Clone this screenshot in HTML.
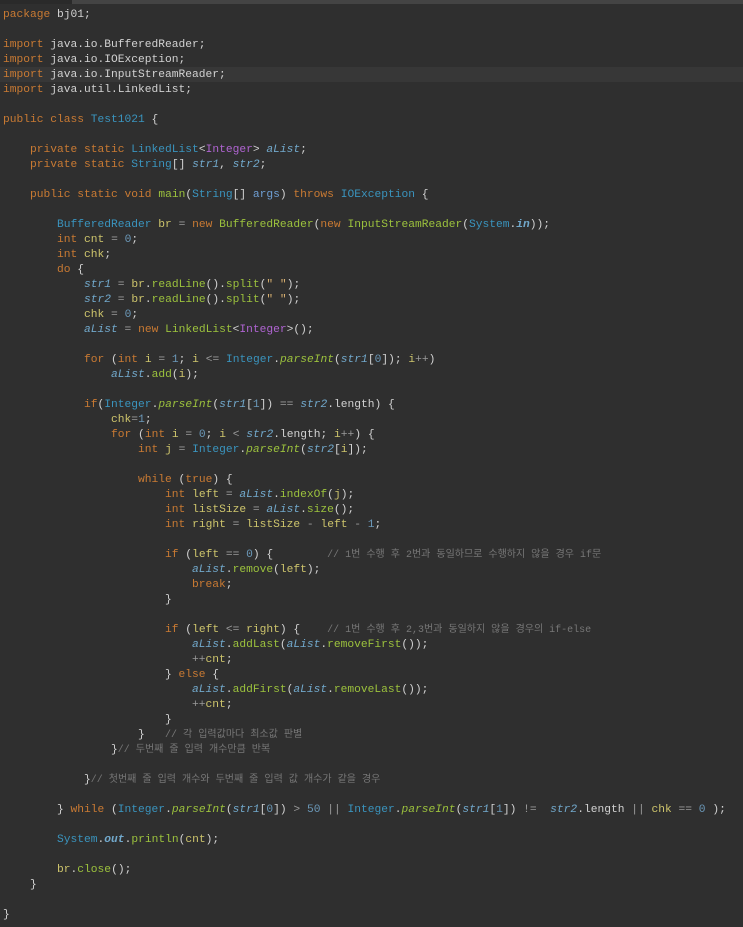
<!DOCTYPE html>
<html><head><meta charset="utf-8"><style>
html,body{margin:0;padding:0;background:#2f2f2f;width:743px;height:927px;overflow:hidden}
.top{position:absolute;left:0;top:0;width:743px;height:4px;background:#2a2a2a}
.top2{position:absolute;left:72px;top:0;width:671px;height:4px;background:#444}
.hl{position:absolute;left:0;top:67px;width:743px;height:15px;background:#373737}
pre{position:absolute;left:3px;top:8px;margin:0;font-family:"Liberation Mono",monospace;font-size:11.25px;line-height:15px;color:#d2d2d2;tab-size:4}
.k{color:#c97a33}
.c{color:#3a94be}
.p{color:#b064d2}
.m{color:#9cc23d}
.v{color:#cdc46c}
.f{color:#72a9cc;font-style:italic}
.s{color:#72a9cc;font-style:italic;font-weight:bold}
.n{color:#6b98b8}
.o{color:#9a9a9a}
.a{color:#6f9fd4}
.cm{color:#777;font-family:"Liberation Mono","Noto Sans CJK KR",monospace;font-size:10px}
.st{color:#d8b070}
</style></head><body>
<div class="top"></div><div class="top2"></div>
<div class="hl"></div>
<pre><span class="k">package</span> bj01;

<span class="k">import</span> java.io.BufferedReader;
<span class="k">import</span> java.io.IOException;
<span class="k">import</span> java.io.InputStreamReader;
<span class="k">import</span> java.util.LinkedList;

<span class="k">public class</span> <span class="c">Test1021</span> {

    <span class="k">private static</span> <span class="c">LinkedList</span>&lt;<span class="p">Integer</span>&gt; <span class="f">aList</span>;
    <span class="k">private static</span> <span class="c">String</span>[] <span class="f">str1</span>, <span class="f">str2</span>;

    <span class="k">public static void</span> <span class="m">main</span>(<span class="c">String</span>[] <span class="a">args</span>) <span class="k">throws</span> <span class="c">IOException</span> {

        <span class="c">BufferedReader</span> <span class="v">br</span> <span class="o">=</span> <span class="k">new</span> <span class="m">BufferedReader</span>(<span class="k">new</span> <span class="m">InputStreamReader</span>(<span class="c">System</span>.<span class="s">in</span>));
        <span class="k">int</span> <span class="v">cnt</span> <span class="o">=</span> <span class="n">0</span>;
        <span class="k">int</span> <span class="v">chk</span>;
        <span class="k">do</span> {
            <span class="f">str1</span> <span class="o">=</span> <span class="v">br</span>.<span class="m">readLine</span>().<span class="m">split</span>(<span class="st">" "</span>);
            <span class="f">str2</span> <span class="o">=</span> <span class="v">br</span>.<span class="m">readLine</span>().<span class="m">split</span>(<span class="st">" "</span>);
            <span class="v">chk</span> <span class="o">=</span> <span class="n">0</span>;
            <span class="f">aList</span> <span class="o">=</span> <span class="k">new</span> <span class="m">LinkedList</span>&lt;<span class="p">Integer</span>&gt;();

            <span class="k">for</span> (<span class="k">int</span> <span class="v">i</span> <span class="o">=</span> <span class="n">1</span>; <span class="v">i</span> <span class="o">&lt;=</span> <span class="c">Integer</span>.<span class="m"><i>parseInt</i></span>(<span class="f">str1</span>[<span class="n">0</span>]); <span class="v">i</span><span class="o">++</span>)
                <span class="f">aList</span>.<span class="m">add</span>(<span class="v">i</span>);

            <span class="k">if</span>(<span class="c">Integer</span>.<span class="m"><i>parseInt</i></span>(<span class="f">str1</span>[<span class="n">1</span>]) <span class="o">==</span> <span class="f">str2</span>.length) {
                <span class="v">chk</span><span class="o">=</span><span class="n">1</span>;
                <span class="k">for</span> (<span class="k">int</span> <span class="v">i</span> <span class="o">=</span> <span class="n">0</span>; <span class="v">i</span> <span class="o">&lt;</span> <span class="f">str2</span>.length; <span class="v">i</span><span class="o">++</span>) {
                    <span class="k">int</span> <span class="v">j</span> <span class="o">=</span> <span class="c">Integer</span>.<span class="m"><i>parseInt</i></span>(<span class="f">str2</span>[<span class="v">i</span>]);

                    <span class="k">while</span> (<span class="k">true</span>) {
                        <span class="k">int</span> <span class="v">left</span> <span class="o">=</span> <span class="f">aList</span>.<span class="m">indexOf</span>(<span class="v">j</span>);
                        <span class="k">int</span> <span class="v">listSize</span> <span class="o">=</span> <span class="f">aList</span>.<span class="m">size</span>();
                        <span class="k">int</span> <span class="v">right</span> <span class="o">=</span> <span class="v">listSize</span> <span class="o">-</span> <span class="v">left</span> <span class="o">-</span> <span class="n">1</span>;

                        <span class="k">if</span> (<span class="v">left</span> <span class="o">==</span> <span class="n">0</span>) {        <span class="cm">// 1번 수행 후 2번과 동일하므로 수행하지 않을 경우 if문</span>
                            <span class="f">aList</span>.<span class="m">remove</span>(<span class="v">left</span>);
                            <span class="k">break</span>;
                        }

                        <span class="k">if</span> (<span class="v">left</span> <span class="o">&lt;=</span> <span class="v">right</span>) {    <span class="cm">// 1번 수행 후 2,3번과 동일하지 않을 경우의 if-else</span>
                            <span class="f">aList</span>.<span class="m">addLast</span>(<span class="f">aList</span>.<span class="m">removeFirst</span>());
                            <span class="o">++</span><span class="v">cnt</span>;
                        } <span class="k">else</span> {
                            <span class="f">aList</span>.<span class="m">addFirst</span>(<span class="f">aList</span>.<span class="m">removeLast</span>());
                            <span class="o">++</span><span class="v">cnt</span>;
                        }
                    }   <span class="cm">// 각 입력값마다 최소값 판별</span>
                }<span class="cm">// 두번째 줄 입력 개수만큼 반복</span>

            }<span class="cm">// 첫번째 줄 입력 개수와 두번째 줄 입력 값 개수가 같을 경우</span>

        } <span class="k">while</span> (<span class="c">Integer</span>.<span class="m"><i>parseInt</i></span>(<span class="f">str1</span>[<span class="n">0</span>]) <span class="o">&gt;</span> <span class="n">50</span> <span class="o">||</span> <span class="c">Integer</span>.<span class="m"><i>parseInt</i></span>(<span class="f">str1</span>[<span class="n">1</span>]) <span class="o">!=</span>  <span class="f">str2</span>.length <span class="o">||</span> <span class="v">chk</span> <span class="o">==</span> <span class="n">0</span> );

        <span class="c">System</span>.<span class="s">out</span>.<span class="m">println</span>(<span class="v">cnt</span>);

        <span class="v">br</span>.<span class="m">close</span>();
    }

}</pre>
</body></html>
